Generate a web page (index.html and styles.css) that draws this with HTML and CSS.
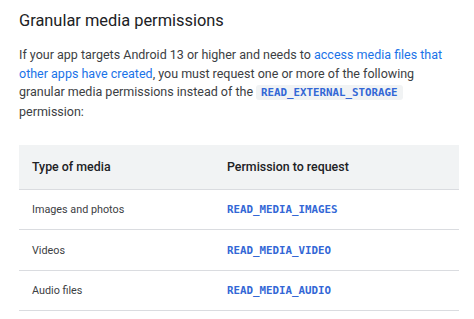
FILE: index.html
```html
<!DOCTYPE html>
<html lang="en">
<head>
    <meta charset="UTF-8">
    <meta name="viewport" content="width=device-width, initial-scale=1.0">
    <title>Granular media permissions</title>
    <link rel="stylesheet" href="styles.css">
</head>
<body>
    <article class="doc">
        <h2>Granular media permissions</h2>
        <p>
            If your app targets Android 13 or higher and needs to
            <a href="#">access media files that other apps have created</a>,
            you must request one or more of the following granular media
            permissions instead of the <code>READ_EXTERNAL_STORAGE</code>
            permission:
        </p>

        <table class="perm-table">
            <thead>
                <tr>
                    <th>Type of media</th>
                    <th>Permission to request</th>
                </tr>
            </thead>
            <tbody>
                <tr>
                    <td>Images and photos</td>
                    <td><code>READ_MEDIA_IMAGES</code></td>
                </tr>
                <tr>
                    <td>Videos</td>
                    <td><code>READ_MEDIA_VIDEO</code></td>
                </tr>
                <tr>
                    <td>Audio files</td>
                    <td><code>READ_MEDIA_AUDIO</code></td>
                </tr>
            </tbody>
        </table>
    </article>
</body>
</html>
```

FILE: styles.css
```css
body {
    margin: 0;
    padding: 0;
    background-color: #ffffff;
    color: #3c4043;
    font-family: Roboto, "Noto Sans", sans-serif;
}

.doc {
    padding: 8px 0 0 19px;
}

h2 {
    margin: 0 0 12px;
    font-size: 16.4px;
    font-weight: 400;
    line-height: 26px;
    color: #202124;
}

p {
    max-width: 430px;
    margin: 0;
    font-size: 12.5px;
    line-height: 18.7px;
}

a {
    color: #1a73e8;
    text-decoration: none;
}

code {
    font-family: "DejaVu Sans Mono", "Liberation Mono", monospace;
    font-size: 10.8px;
    color: #3367d6;
    font-weight: 600;
}

p code {
    background-color: #f1f3f4;
    padding: 1px 5px;
    border-radius: 3px;
}

.perm-table {
    width: 440px;
    margin-top: 23px;
    border-collapse: collapse;
    font-size: 10.8px;
}

.perm-table th,
.perm-table td {
    text-align: left;
    padding: 0 0 0 13px;
    border-bottom: 1px solid #dadce0;
}

.perm-table th {
    height: 44px;
    font-weight: 500;
    font-size: 12.4px;
    color: #202124;
    background-color: #f1f3f4;
}

.perm-table td {
    height: 39.5px;
}

.perm-table th:first-child,
.perm-table td:first-child {
    width: 182px;
}
```
